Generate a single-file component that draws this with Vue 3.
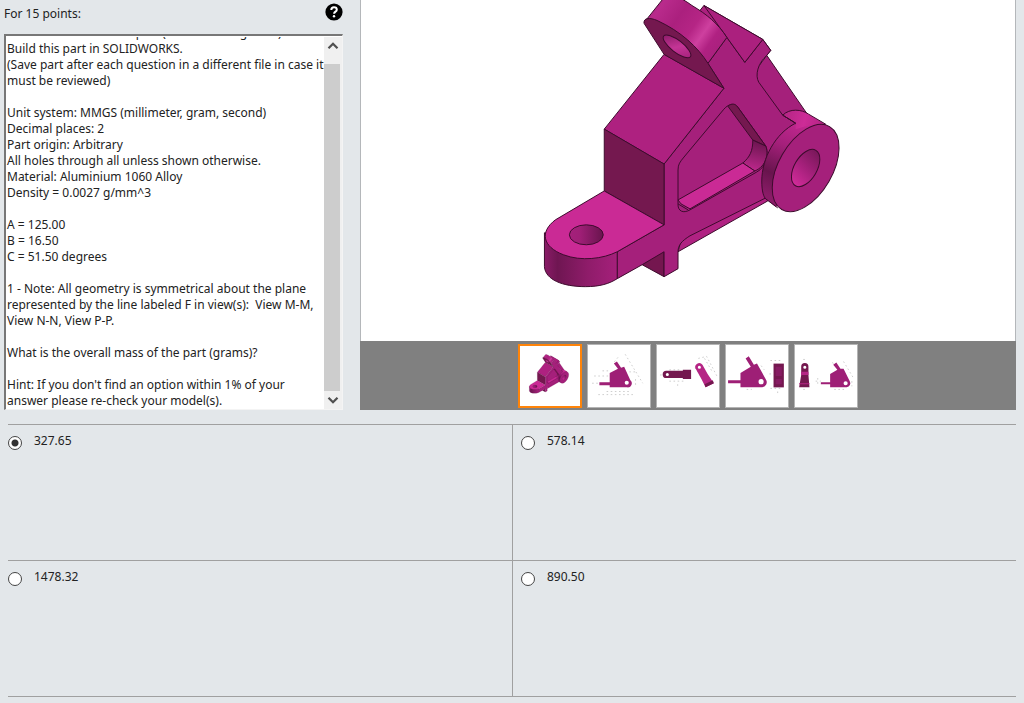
<template>
  <main class="exam">
    <section class="question">
      <div class="prompt">
        <div class="prompt-head">
          <label for="question-text">For 15 points:</label>
          <button class="help" type="button" aria-label="Help">
            <svg viewBox="0 0 18 18">
              <circle cx="9" cy="9" r="8.6" fill="#000" />
              <path d="M6.3 7C6.3 5.2 7.4 4.3 9 4.3s2.8.9 2.8 2.4c0 2-2.7 1.9-2.7 4" fill="none" stroke="#fff" stroke-width="2" />
              <circle cx="9" cy="13.2" r="1.2" fill="#fff" />
            </svg>
          </button>
        </div>
        <div class="text-frame">
          <textarea id="question-text" ref="textBox" readonly :value="questionText"></textarea>
          <div class="scrollbar">
            <button type="button" aria-label="Scroll up" @click="scroll(-16)">
              <svg viewBox="0 0 16 16"><path d="M4 10l4-4 4 4" /></svg>
            </button>
            <div class="thumb"></div>
            <button type="button" aria-label="Scroll down" @click="scroll(16)">
              <svg viewBox="0 0 16 16"><path d="M4 6l4 4 4-4" /></svg>
            </button>
          </div>
        </div>
      </div>

      <div class="viewer">
        <div class="stage">
          <svg class="model" viewBox="360 0 656 341" role="img" aria-label="Bracket, isometric view">
            <defs>
              <linearGradient id="lug" gradientUnits="userSpaceOnUse" x1="650" y1="2" x2="724" y2="54">
                <stop offset="0" stop-color="#a5207b" />
                <stop offset=".12" stop-color="#b92b8c" />
                <stop offset=".35" stop-color="#ab207e" />
                <stop offset=".55" stop-color="#b52585" />
                <stop offset=".68" stop-color="#ce409f" />
                <stop offset=".8" stop-color="#b02182" />
                <stop offset="1" stop-color="#a5207b" />
              </linearGradient>
              <linearGradient id="base" gradientUnits="userSpaceOnUse" x1="544" y1="0" x2="617" y2="0">
                <stop offset="0" stop-color="#8a1b67" />
                <stop offset=".18" stop-color="#6f1652" />
                <stop offset=".6" stop-color="#8f1c6a" />
                <stop offset="1" stop-color="#a5207b" />
              </linearGradient>
              <linearGradient id="bore" x1="0" x2="1">
                <stop offset="0" stop-color="#a5207b" />
                <stop offset=".3" stop-color="#a01f77" />
                <stop offset="1" stop-color="#68144d" />
              </linearGradient>
              <linearGradient id="bossBore" gradientUnits="userSpaceOnUse" x1="810" y1="150" x2="800" y2="186">
                <stop offset="0" stop-color="#7c185c" />
                <stop offset=".5" stop-color="#a5207b" />
                <stop offset="1" stop-color="#cf2b98" />
              </linearGradient>
              <linearGradient id="boss" gradientUnits="userSpaceOnUse" x1="805" y1="115" x2="770" y2="196">
                <stop offset="0" stop-color="#c92a95" />
                <stop offset=".4" stop-color="#a5207b" />
                <stop offset=".75" stop-color="#68144d" />
                <stop offset="1" stop-color="#8a1b67" />
              </linearGradient>
              <linearGradient id="collar" gradientUnits="userSpaceOnUse" x1="785" y1="112" x2="826" y2="124">
                <stop offset="0" stop-color="#b52585" />
                <stop offset=".5" stop-color="#cd2c97" />
                <stop offset="1" stop-color="#b02282" />
              </linearGradient>
              <linearGradient id="lugBore" gradientUnits="userSpaceOnUse" x1="665" y1="38" x2="689" y2="56">
                <stop offset="0" stop-color="#8f1c6a" />
                <stop offset=".5" stop-color="#c43596" />
                <stop offset="1" stop-color="#a5207b" />
              </linearGradient>
              <linearGradient id="corner" gradientUnits="userSpaceOnUse" x1="757" y1="142" x2="750" y2="170">
                <stop offset="0" stop-color="#6f1652" />
                <stop offset="1" stop-color="#bd288c" />
              </linearGradient>
            </defs>
            <g id="bracket" stroke="#3d0b2d" stroke-width="1" stroke-linejoin="round">
              <!-- underside and foot -->
              <path d="M678 252L768 201L760 192L684 230Z" fill="#b02282" />
              <path d="M642 265L664 250V277Z" fill="#74164f" />
              <!-- rear edge of the upper arm -->
              <path d="M767 55L807 113L796 125L783 115L750 78Z" fill="#a5207b" />
              <path d="M700 10L704 5L763 39L771 50L767 55L745 62L727 37Z" fill="#ab207e" />
              <!-- front web with its window -->
              <path d="M664 164L724 88L708 63L727 37L745 62L763 39L771 50L767 55C758 63 755 75 759 82L783 115L796 123L806 180L768 197L690 236C682 241 678 245 678 252V269L664 277V252L642 265L617 279V252L664 225Z" fill="#a5207b" />
              <path d="M727 37L745 62L763 39L704 5Z" fill="#ab207e" />
              <path d="M724 109C729 103 735 103 738 107L766 146C769 152 767 167 757 172L690 210C683 214 678 211 678 205V170C678 164 680 162 684 157Z" fill="#a5207b" />
              <path d="M728 106C732 103 735 103 738 107L766 146L753 140Z" fill="#74184f" />
              <path d="M753 140L766 146C769 153 767 166 755 171L743 163C750 157 753 151 753 140Z" fill="url(#corner)" />
              <path d="M678 200L743 163L755 171L690 209L681 204Z" fill="#ca2a95" />
              <path d="M678 204L688 210" fill="none" />
              <!-- body block -->
              <path d="M664 54L724 88L664 164L604 129Z" fill="#ae2180" />
              <path d="M604 129L664 164V225L604 191Z" fill="#74184f" />
              <!-- base lug -->
              <path d="M544 233V267C545 280 562 287 585 287C600 287 609 284 617 279V252L600 245Z" fill="url(#base)" />
              <path d="M604 191L664 225L617 252C603 259 581 262 563 255C542 247 539 232 555 220Z" fill="#ca2a95" />
              <ellipse cx="586" cy="235" rx="17" ry="10" fill="url(#bore)" />
              <!-- upper lug -->
              <path d="M644 22L664 -3C671 -8 681 -3 692 5C707 14 718 23 727 37L708 63L690 45L650 19Z" fill="url(#lug)" />
              <path d="M664 54L644 23C643 17 650 17 657 20C681 31 698 47 708 63L724 88Z" fill="#74184f" />
              <ellipse cx="677" cy="46" rx="17" ry="6" transform="rotate(38 677 46)" fill="url(#lugBore)" />
              <!-- boss -->
              <path d="M783 115C790 108 802 109 809 114L826 124L812 138L788 137L796 123Z" fill="url(#collar)" />
              <path d="M796 123C776 133 762 158 762 181C762 192 764 197 766 199L776 207L800 190L825 125C816 123 805 126 796 129Z" fill="url(#boss)" stroke="none" />
              <path d="M783 115L796 123C776 133 762 158 762 181C762 192 764 197 766 199L778 208" fill="none" />
              <ellipse cx="806" cy="168" rx="27" ry="48" transform="rotate(30 806 168)" fill="#a5207b" />
              <ellipse cx="806" cy="168" rx="11.4" ry="20.5" transform="rotate(30 806 168)" fill="url(#bossBore)" />
            </g>
          </svg>
        </div>
        <div class="strip">
          <button v-for="view in views" :key="view.id" type="button" :aria-label="view.label"
                  class="view" :class="{ active: view.id === activeView }" @click="activeView = view.id">
            <svg v-if="view.id === 'iso'" viewBox="474 -68 450 450"><use href="#bracket" /></svg>
            <svg v-else viewBox="0 0 60 60">
              <path :d="view.marks" fill="none" stroke="#bbb" stroke-width=".7" stroke-dasharray="1.5 2.5" />
              <path v-for="shape in view.shapes" :key="shape.d" :d="shape.d" :fill="shape.fill" fill-rule="evenodd" />
            </svg>
          </button>
        </div>
      </div>
    </section>

    <section class="answers" role="radiogroup" aria-label="Overall mass of the part">
      <label v-for="option in options" :key="option" class="answer">
        <input v-model="answer" type="radio" name="mass" :value="option">
        <span>{{ option }}</span>
      </label>
    </section>
  </main>
</template>

<script setup>
  import { onMounted, ref } from 'vue';

  const questionText = `Mechanical bracket 01 part (Initial drawing state)
Build this part in SOLIDWORKS.
(Save part after each question in a different file in case it
must be reviewed)

Unit system: MMGS (millimeter, gram, second)
Decimal places: 2
Part origin: Arbitrary
All holes through all unless shown otherwise.
Material: Aluminium 1060 Alloy
Density = 0.0027 g/mm^3

A = 125.00
B = 16.50
C = 51.50 degrees

1 - Note: All geometry is symmetrical about the plane
represented by the line labeled F in view(s):  View M-M,
View N-N, View P-P.

What is the overall mass of the part (grams)?

Hint: If you don't find an option within 1% of your
answer please re-check your model(s).`;

  const options = ['327.65', '578.14', '1478.32', '890.50'];
  const answer = ref('327.65');

  const views = [
    { id: 'iso', label: 'Isometric view' },
    {
      id: 'side',
      label: 'Side view',
      marks: 'M36 9L53 37M10 48H44M6 30H20M14 25H22M4 37H12M29 12L24 18M46 33V40M40 26H47M18 45H40',
      shapes: [
        { d: 'M11 36H21V27L29 23L25 18L28 16L32 22L35 21L41 34A4 4 0 0 1 38 41H21V39H11ZM37.500 34.500A2 2 0 1 0 37.500 38.500A2 2 0 1 0 37.500 34.500Z', fill: '#9e1f76' },
      ],
    },
    {
      id: 'sections',
      label: 'Section views',
      marks: 'M3 29H7M12 24H22M12 35H28M20 38V42M40 13L48 11L59 32M37 22L48 39M46 13L53 25',
      shapes: [
        { d: 'M9 25H25V24H33V33H25V32H9A3.500 3.500 0 0 1 9 25ZM10 27A1.500 1.500 0 1 0 10 30A1.500 1.500 0 1 0 10 27Z', fill: '#74184f' },
        { d: 'M38 24A3.500 3.500 0 0 1 44 19L49 28L55 37L47 41L43 33ZM41 20A1.500 1.500 0 1 0 41 23A1.500 1.500 0 1 0 41 20Z', fill: '#b52585' },
        { d: 'M46 38L54 34L55 37L47 41Z', fill: '#74184f' },
      ],
    },
    {
      id: 'front',
      label: 'Side and end views',
      marks: 'M43 15H55M42 28H46M43 42H54M50 45V47M20 43H25M34 20L37 24',
      shapes: [
        { d: 'M2 34H14V27L24 21L19 13L22 11L27 19L30 18L39 34A5 5 0 0 1 35 41H14V37H2ZM34 33A2.500 2.500 0 1 0 34 38A2.500 2.500 0 1 0 34 33Z', fill: '#9e1f76' },
        { d: 'M46 18H56V41H46Z', fill: '#74184f' },
        { d: 'M48 21H54V30H48ZM48 33H54V38H48Z', fill: '#861b62' },
      ],
    },
    {
      id: 'end',
      label: 'End and side views',
      marks: 'M8 14H10M8 43H10M20 35H25M22 32V40M38 43H50M36 17L39 19M47 16L56 31M55 35V40',
      shapes: [
        { d: 'M6 29V21A3.500 3.500 0 0 1 13 21V29L14 41H4ZM9.500 20A1.500 1.500 0 1 0 9.500 23A1.500 1.500 0 1 0 9.500 20Z', fill: '#74184f' },
        { d: 'M6 26H13V29H6ZM4 37H14V38H4Z', fill: '#b52585' },
        { d: 'M25 36H34V28L41 24L37 19L40 17L44 23L47 23L53 35A4 4 0 0 1 50 41H34V38H25ZM49 35A2 2 0 1 0 49 39A2 2 0 1 0 49 35Z', fill: '#9e1f76' },
      ],
    },
  ];
  const activeView = ref('iso');

  const textBox = ref(null);

  function scroll(delta) {
    textBox.value.scrollTop += delta;
  }

  onMounted(() => {
    textBox.value.scrollTop = textBox.value.scrollHeight;
  });
</script>

<style>
  body {
    background-color: #e3e7ea;
  }
</style>

<style scoped>
  .exam {
    font-family: "Noto Sans", "Open Sans", sans-serif;
    font-size: 12px;
    line-height: 16px;
    color: #222;
    padding: 0 8px 8px 4px;
  }

  .exam * {
    box-sizing: border-box;
  }

  .question {
    display: grid;
    grid-template-columns: 339px 1fr;
    column-gap: 17px;
  }

  .prompt {
    display: flex;
    flex-direction: column;
  }

  .prompt-head {
    display: flex;
    justify-content: space-between;
    align-items: flex-start;
    height: 34px;
    padding-top: 3px;
  }

  .prompt-head label {
    padding-top: 3px;
  }

  .help {
    width: 18px;
    height: 18px;
    padding: 0;
    border: 0;
    background: none;
  }

  svg {
    display: block;
    width: 100%;
    height: 100%;
  }

  .text-frame {
    display: flex;
    height: 376px;
    padding-top: 1px;
    background-color: #fff;
    border: 1px solid #f4f4f4;
    border-top: 2px solid #777;
    border-left: 2px solid #777;
  }

  textarea {
    flex: 1;
    min-width: 0;
    padding: 0 0 0 1px;
    border: 0;
    outline: 0;
    resize: none;
    overflow: hidden;
    white-space: pre;
    background: none;
    font: inherit;
    color: inherit;
  }

  .scrollbar {
    display: flex;
    flex-direction: column;
    width: 18px;
    background-color: #f0f0f0;
  }

  .scrollbar button {
    height: 18px;
    padding: 0;
    border: 0;
    background: none;
  }

  .scrollbar path {
    fill: none;
    stroke: #505050;
    stroke-width: 2;
  }

  .thumb {
    flex: 1;
    margin: 9px 2px 0 0;
    background-color: #cdcdcd;
  }

  .viewer {
    display: flex;
    flex-direction: column;
  }

  .stage {
    height: 341px;
    background-color: #fff;
    border-left: 1px solid #b4b7ba;
    border-right: 1px solid #b4b7ba;
  }

  .strip {
    display: flex;
    flex: 1;
    justify-content: center;
    align-items: center;
    gap: 5px;
    background-color: #808080;
  }

  .view {
    width: 64px;
    height: 64px;
    padding: 0;
    border: 1px solid #b4b4b4;
    background-color: #fff;
  }

  .view.active {
    border: 2px solid #ff8409;
  }

  .answers {
    display: grid;
    grid-template-columns: 1fr 1fr;
    margin: 14px 0 0 4px;
    border-top: 1px solid #a0a0a0;
  }

  .answer {
    display: flex;
    align-items: flex-start;
    gap: 12px;
    height: 136px;
    padding-top: 8px;
    border-bottom: 1px solid #a0a0a0;
  }

  .answer:nth-child(even) {
    padding-left: 8px;
    border-left: 1px solid #a0a0a0;
  }

  input {
    appearance: none;
    width: 14px;
    height: 14px;
    margin: 3px 0 0;
    border: 1px solid #444;
    border-radius: 50%;
    background-color: #fff;
  }

  input:checked {
    background-image: radial-gradient(circle, #333 0 3px, transparent 4px);
  }
</style>
